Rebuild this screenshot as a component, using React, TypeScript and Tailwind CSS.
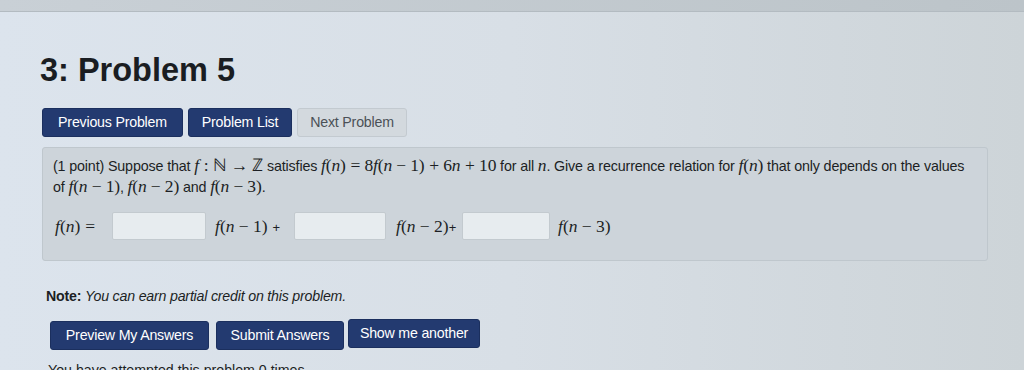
import React from 'react';

const M: React.FC<{ children: React.ReactNode }> = ({ children }) => (
  <span className="font-['Liberation_Serif',serif] italic">{children}</span>
);

const R: React.FC<{ children: React.ReactNode }> = ({ children }) => (
  <span className="font-['Liberation_Serif',serif] not-italic">{children}</span>
);

// inline math, a bit larger than the prose like MathJax output
const X: React.FC<{ children: React.ReactNode }> = ({ children }) => (
  <span className="text-[17.5px] leading-none">{children}</span>
);

const Fn: React.FC<{ arg: React.ReactNode }> = ({ arg }) => (
  <>
    <M>f</M>
    <R>(</R>
    {arg}
    <R>)</R>
  </>
);

const Sub: React.FC<{ k: number }> = ({ k }) => (
  <>
    <M>n</M>
    <R> − {k}</R>
  </>
);

const navBtn = 'h-[29px] rounded-[3px] px-[13px] text-[14.2px] flex items-center justify-center whitespace-nowrap tracking-[-0.2px]';
const dark = 'bg-[#233a70] text-white border border-[#1b2f5e]';

export default function App() {
  return (
    <div className="w-[1024px] h-[370px] overflow-hidden bg-gradient-to-r from-[#dce4ed] via-[#d8dfe6] to-[#cdd4d8] font-['Liberation_Sans',Arial,sans-serif] text-[#1c1f24]">
      <div className="h-[12px] bg-gradient-to-r from-[#c9d0d6] to-[#bcc4c9] border-b border-[#b3bbc1]" />

      <div className="pl-[40px] pt-[40px]">
        <h1 className="text-[32.5px] font-bold leading-[36px] text-[#1a1d22]">3: Problem 5</h1>

        <div className="flex gap-[5px] mt-[20px] ml-[2px]">
          <button className={`${navBtn} ${dark} w-[141px]`}>Previous Problem</button>
          <button className={`${navBtn} ${dark} w-[104px]`}>Problem List</button>
          <button className={`${navBtn} w-[110px] bg-[#d3d9de] text-[#4b5157] border border-[#c3cad0]`}>Next Problem</button>
        </div>

        <div className="mt-[10px] ml-[2px] w-[946px] h-[114px] bg-[#cdd4da] border border-[#bfc7cd] rounded-[3px] px-[10px] pt-[8px]">
          <p className="text-[14.3px] leading-[21px] tracking-[-0.15px] whitespace-nowrap">
            (1 point) Suppose that{' '}
            <X>
              <M>f</M> <R>: ℕ → ℤ</R>
            </X>{' '}
            satisfies{' '}
            <X>
              <Fn arg={<M>n</M>} /> <R>= 8</R>
              <Fn arg={<Sub k={1} />} /> <R>+ 6</R>
              <M>n</M> <R>+ 10</R>
            </X>{' '}
            for all{' '}
            <X>
              <M>n</M>
            </X>
            . Give a recurrence relation for{' '}
            <X>
              <Fn arg={<M>n</M>} />
            </X>{' '}
            that only depends on the values
            <br />
            of{' '}
            <X>
              <Fn arg={<Sub k={1} />} />
            </X>
            ,{' '}
            <X>
              <Fn arg={<Sub k={2} />} />
            </X>{' '}
            and{' '}
            <X>
              <Fn arg={<Sub k={3} />} />
            </X>
            .
          </p>

          <div className="flex items-center mt-[14px] ml-[2px] text-[17.5px]">
            <span className="w-[57px]">
              <Fn arg={<M>n</M>} /> <R>=</R>
            </span>
            <div className="w-[94px] h-[28px] bg-[#e7ecef] border border-[#c3cacf] rounded-[2px]" />
            <span className="ml-[9px] w-[79px]">
              <Fn arg={<Sub k={1} />} /> <span className="text-[13px]">+</span>
            </span>
            <div className="w-[92px] h-[28px] bg-[#e7ecef] border border-[#c3cacf] rounded-[2px]" />
            <span className="ml-[10px] w-[66px]">
              <Fn arg={<Sub k={2} />} />
              <span className="text-[13px]">+</span>
            </span>
            <div className="w-[88px] h-[28px] bg-[#e7ecef] border border-[#c3cacf] rounded-[2px]" />
            <span className="ml-[8px]">
              <Fn arg={<Sub k={3} />} />
            </span>
          </div>
        </div>

        <p className="mt-[25px] ml-[6px] text-[14.2px] tracking-[-0.2px]">
          <b>Note:</b> <i>You can earn partial credit on this problem.</i>
        </p>

        <div className="flex gap-[7px] mt-[14px] ml-[10px]">
          <button className={`${navBtn} ${dark} w-[159px]`}>Preview My Answers</button>
          <button className={`${navBtn} ${dark} w-[128px]`}>Submit Answers</button>
          <button className={`${navBtn} ${dark} w-[132px] -ml-[3px] -translate-y-[2px]`}>Show me another</button>
        </div>

        <p className="mt-[10px] ml-[8px] text-[14.2px]">You have attempted this problem 0 times.</p>
      </div>
    </div>
  );
}
